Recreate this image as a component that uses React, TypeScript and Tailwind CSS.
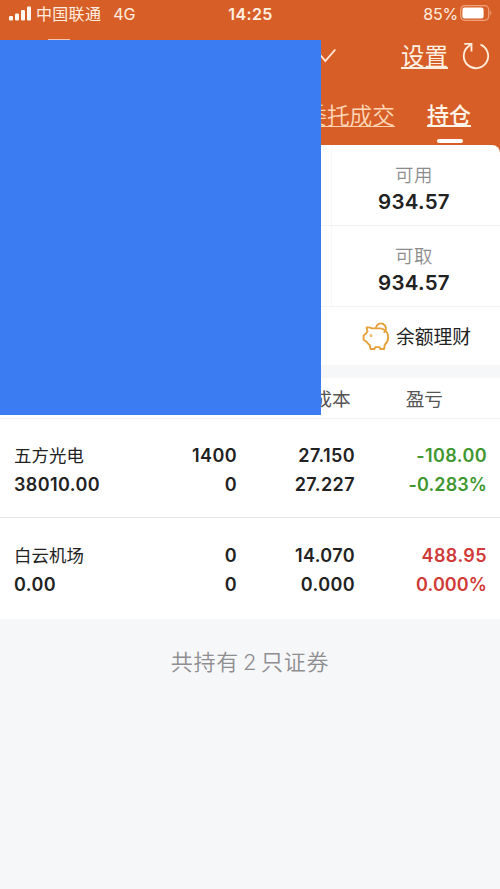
import type { ReactNode } from 'react';

type Holding = {
  name: string;
  marketValue: string;
  quantity: string;
  available: string;
  price: string;
  cost: string;
  profit: string;
  profitRate: string;
  trend: 'up' | 'down';
};

const holdings: Holding[] = [
  {
    name: '五方光电',
    marketValue: '38010.00',
    quantity: '1400',
    available: '0',
    price: '27.150',
    cost: '27.227',
    profit: '-108.00',
    profitRate: '-0.283%',
    trend: 'down',
  },
  {
    name: '白云机场',
    marketValue: '0.00',
    quantity: '0',
    available: '0',
    price: '14.070',
    cost: '0.000',
    profit: '488.95',
    profitRate: '0.000%',
    trend: 'up',
  },
];

const StatusBar = () => (
  <div className="grid h-7 grid-cols-3 items-center pl-[9px] pr-2 text-[#ffeee0]">
    <div className="flex items-center">
      <svg className="mb-[2px]" width="23" height="15" viewBox="0 0 23 15" fill="#fff8f0">
        <rect x="0" y="10" width="4" height="4.5" rx="1" />
        <rect x="6" y="7.5" width="4" height="7" rx="1" />
        <rect x="12" y="4" width="4" height="10.5" rx="1" />
        <rect x="18" y="0.5" width="4" height="14" rx="1" />
      </svg>
      <span className="ml-[4px] text-[16px] leading-7 tracking-[0.3px]">中国联通</span>
      <span className="ml-[12px] text-[16px] leading-7">4G</span>
    </div>
    <div className="text-center text-[16px] font-semibold leading-7 tracking-[0.4px]">14:25</div>
    <div className="flex items-center justify-end">
      <span className="text-[16px] leading-7 tracking-[-0.2px]">85%</span>
      <svg className="mb-[2px] ml-[2px]" width="32" height="16" viewBox="0 0 32 16" fill="none">
        <rect x="0.7" y="0.7" width="28" height="14.6" rx="4" stroke="#f0a27c" strokeWidth="1.2" />
        <rect x="2.4" y="2.6" width="21.2" height="10.8" rx="2.2" fill="#fff" />
        <path d="M30.2 5.6c1.5.8 1.5 4 0 4.8z" fill="#f0a27c" />
      </svg>
    </div>
  </div>
);

const RefreshIcon = () => (
  <svg width="28" height="28" viewBox="0 0 28 28" fill="none" stroke="#ffeedd" strokeWidth="1.8">
    <path d="M18.5 2.7A12.2 12.2 0 1 1 6.6 4.3L9.5 1.9" />
    <path d="M2.3 1.9H9.5V9.5" />
  </svg>
);

const PiggyIcon = () => (
  <svg width="28" height="29" viewBox="0 0 28 29" fill="none" stroke="#e6a13a" strokeWidth="1.9" strokeLinejoin="round" strokeLinecap="round">
    <path d="M14 5.4a5 5 0 1 1 8.4 4.6" />
    <path d="M9.8 6.4h8.8c4.5.8 7.6 4.4 7.6 8.8 0 3-1.3 5.6-3.4 7.5l-.7 4.3h-3.7l-1-1.9h-4l-1 1.9H8.6l-.9-4c-1.2-.8-2.2-1.8-2.9-3L1.6 17.8v-4.400l2.5-1.8c.3-.9.8-1.6 1.4-2.200L4.6 5.500c2.200-.4 4 .1 5.200.9z" />
    <circle cx="9" cy="13.7" r="0.4" />
  </svg>
);

const BalanceCell = ({ label, value }: { label: string; value: string }) => (
  <div className="ml-[331px] h-20 border-l border-[#fbf6f9] pr-[4px] pt-[17px] text-center">
    <p className="text-[18.5px] font-[350] leading-[27px] tracking-[0.6px] text-[#8c8c8c]">{label}</p>
    <p className="text-[20.5px] font-semibold leading-[25px] tracking-[0.3px]">{value}</p>
  </div>
);

const Column = ({ className, children }: { className: string; children: ReactNode }) => (
  <div className={className}>{children}</div>
);

const HoldingRow = ({ item }: { item: Holding }) => (
  <div className="grid h-[101px] grid-cols-[123px_100px_118px_132px] pl-[14px] pt-[23px] text-[18px] font-semibold leading-[29px] tracking-[0.4px] first:h-[99px] first:pt-[22px]">
    <Column className="text-left">
      <p className="text-[17.4px] font-normal tracking-[0.1px]">{item.name}</p>
      <p>{item.marketValue}</p>
    </Column>
    <Column className="text-right">
      <p>{item.quantity}</p>
      <p>{item.available}</p>
    </Column>
    <Column className="text-right">
      <p>{item.price}</p>
      <p>{item.cost}</p>
    </Column>
    <Column className={item.trend === 'up' ? 'text-right text-[#d03a38]' : 'text-right text-[#41972f]'}>
      <p>{item.profit}</p>
      <p className="tracking-[0.1px]">{item.profitRate}</p>
    </Column>
  </div>
);

export default function App() {
  return (
    <div className="relative h-[889px] w-[500px] overflow-hidden bg-[#f6f7f9] font-['Inter','Noto_Sans_CJK_SC',sans-serif] text-[#222]">
      <header className="h-[145px] bg-[#d75f27]">
        <StatusBar />
        <div className="flex h-14 items-center justify-end pr-[10px] text-[#fff1e4]">
          <svg className="mr-[64px]" width="18" height="16" viewBox="0 0 18 16" fill="none" stroke="#ffe9d8" strokeWidth="1.8">
            <path d="M1 6.5L6.3 13 16.3 1.5" />
          </svg>
          <span className="mr-[14px] border-b-2 border-[#ffeee0] text-[23.5px] leading-[23px]">
            <span className="relative top-px">设置</span>
          </span>
          <RefreshIcon />
        </div>
        <nav className="flex h-[61px] justify-end pr-[29px] pt-[18px]">
          <span className="mr-[32px] h-[25px] border-b border-[#ffd0ac] text-[22.7px] font-[350] leading-[27px] text-[#ffd7b8]">
            委托成交
          </span>
          <div className="flex flex-col items-end">
            <span className="h-[25px] border-b-2 border-[#fff4e8] text-[22px] font-medium leading-[26px] text-[#fff4e8]">
              持仓
            </span>
            <span className="mr-[8px] mt-[12px] h-1 w-[26px] rounded-full bg-white" />
          </div>
        </nav>
      </header>

      <div className="bg-[linear-gradient(#d75f27_10px,#fff_10px)]">
        <section className="rounded-tr-[8px] bg-white">
          <BalanceCell label="可用" value="934.57" />
          <div className="border-t border-[#f3f3f5]">
            <BalanceCell label="可取" value="934.57" />
          </div>
          <div className="flex h-[59px] items-center justify-end border-t border-[#f3f3f5] pr-[29px] pt-px">
            <PiggyIcon />
            <span className="ml-[6px] pt-[3px] text-[18.8px]">余额理财</span>
          </div>
        </section>
      </div>

      <section className="mt-[13px] bg-white">
        <div className="flex h-[41px] items-center justify-end border-b border-[#f3f3f5] pr-[57px] pt-[4px] text-[18.7px] text-[#555]">
          <span className="mr-[55px]">成本</span>
          <span>盈亏</span>
        </div>
        <div className="divide-y divide-[#e4e4e6]">
          {holdings.map((item) => (
            <HoldingRow key={item.name} item={item} />
          ))}
        </div>
      </section>

      <p className="pt-[26px] text-center text-[22px] font-[350] leading-[34px] tracking-[0.7px] text-[#8e8e90]">
        共持有<span className="mx-1">2</span>只证券
      </p>

      {/* Solid block covering the account details */}
      <div className="absolute left-0 top-10 h-[375px] w-[321px] bg-[#3b7cf3]" />
      <div className="absolute left-12 top-[39px] h-px w-[22px] bg-[#f3c4b0]" />
    </div>
  );
}
